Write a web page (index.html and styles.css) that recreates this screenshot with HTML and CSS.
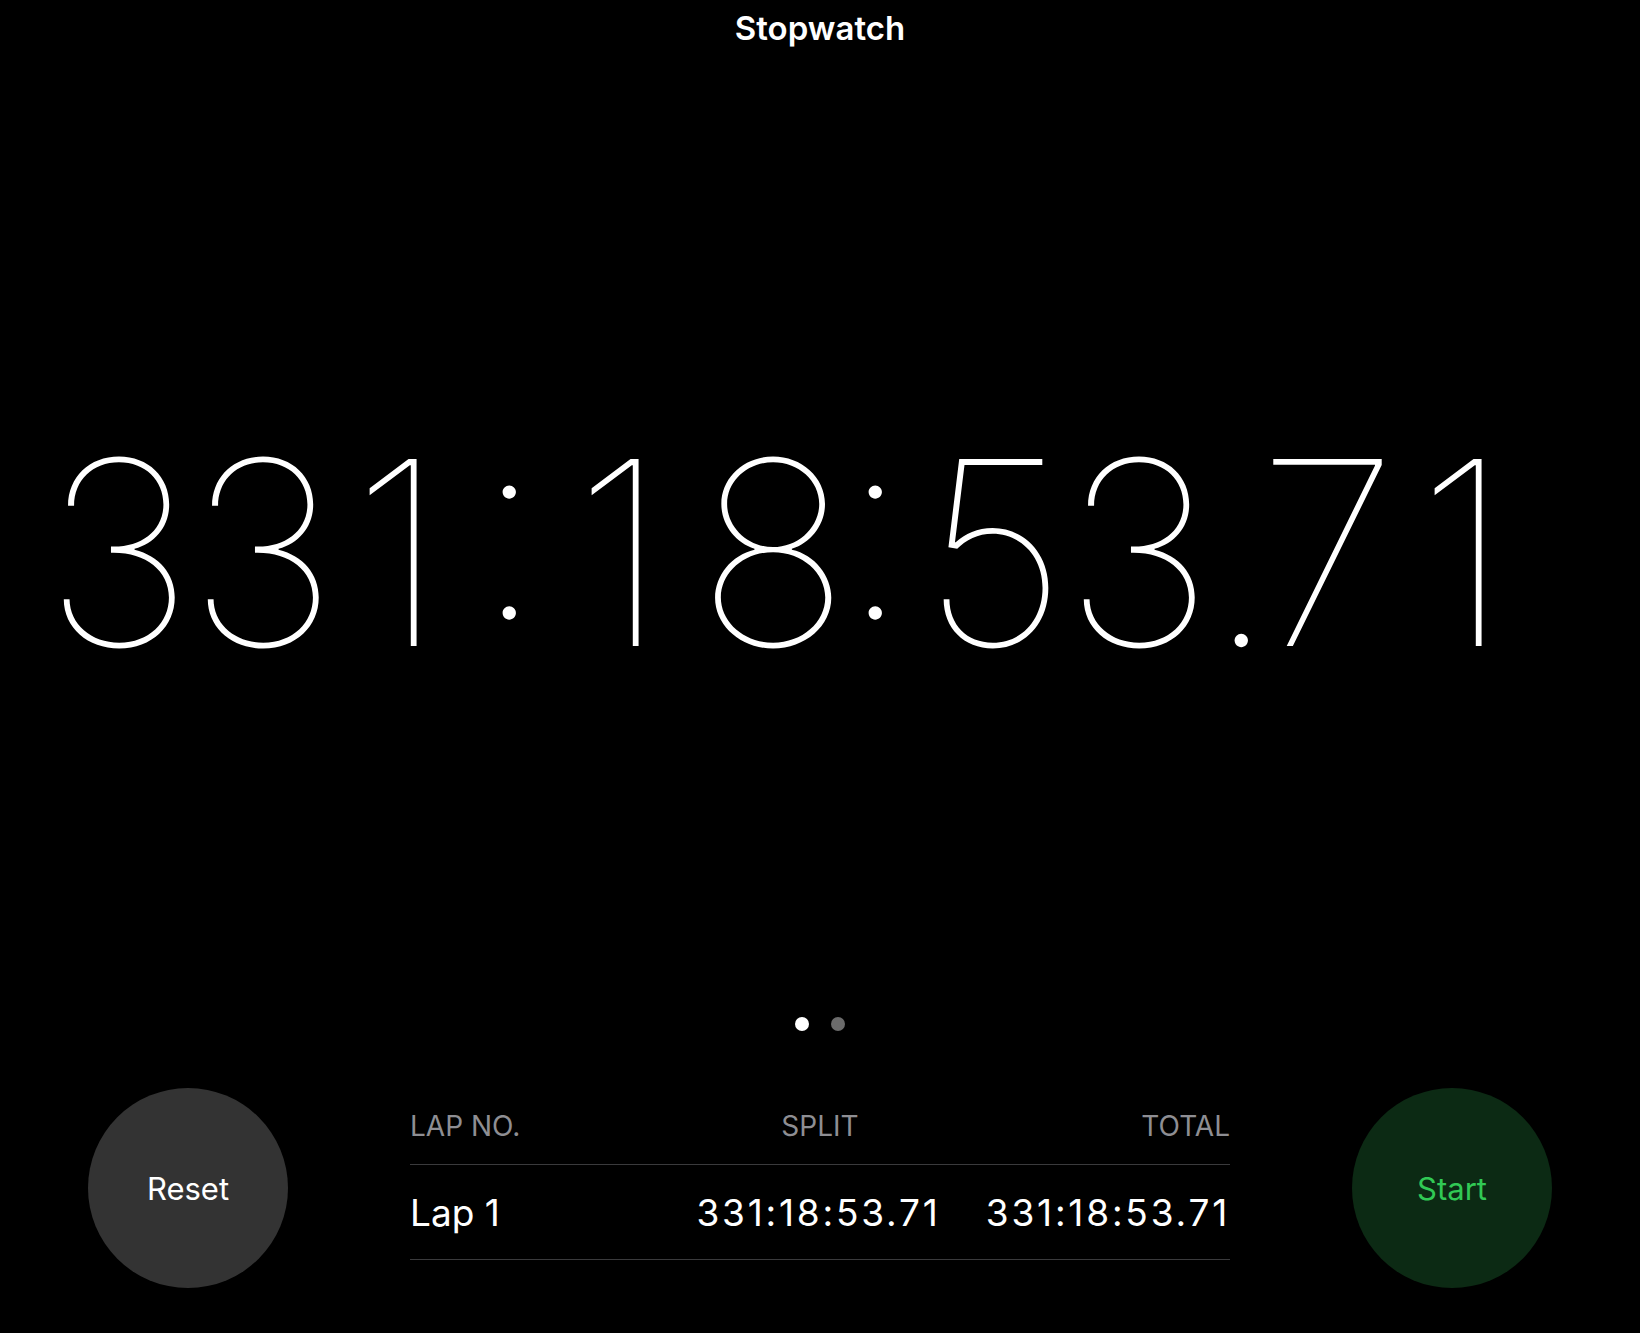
FILE: index.html
```html
<!DOCTYPE html>
<html lang="en">
<head>
    <meta charset="UTF-8">
    <meta name="viewport" content="width=device-width, initial-scale=1.0">
    <title>Stopwatch</title>
    <link rel="stylesheet" href="styles.css">
</head>
<body>
    <div id="stopwatch">
        <h1 class="title">Stopwatch</h1>

        <div class="readout">
            <span class="d">3</span><span class="d">3</span><span class="d one">1</span><span class="sep">:</span><span class="d one">1</span><span class="d">8</span><span class="sep">:</span><span class="d">5</span><span class="d">3</span><span class="pt">.</span><span class="d">7</span><span class="d one">1</span>
        </div>

        <div class="pager">
            <span class="dot active"></span>
            <span class="dot"></span>
        </div>

        <div class="controls">
            <button class="round reset">Reset</button>

            <div class="laps">
                <div class="laps-row laps-head">
                    <span class="col-lap">LAP NO.</span>
                    <span class="col-split">SPLIT</span>
                    <span class="col-total">TOTAL</span>
                </div>
                <div class="laps-row laps-item">
                    <span class="col-lap">Lap 1</span>
                    <span class="col-split">331:18:53.71</span>
                    <span class="col-total">331:18:53.71</span>
                </div>
            </div>

            <button class="round start">Start</button>
        </div>
    </div>
</body>
</html>
```

FILE: styles.css
```css
html, body {
    margin: 0;
    padding: 0;
    background-color: black;
    color: white;
    font-family: Inter, Roboto, "Noto Sans", sans-serif;
}

#stopwatch {
    display: flex;
    flex-direction: column;
    align-items: center;
}

.title {
    margin: 0;
    font-size: 33px;
    font-weight: 600;
    line-height: 56px;
}

.readout {
    display: flex;
    margin-top: 368px;
    padding-right: 58px;
    font-size: 257px;
    font-weight: 125;
    line-height: 257px;
}

.readout .d {
    width: 144px;
    text-align: center;
    letter-spacing: -8px;
}

/* the one's stem sits a little left of the cell centre */
.readout .d.one {
    width: 128px;
    padding-right: 16px;
}

.readout .sep,
.readout .pt {
    text-align: left;
}

.readout .sep {
    width: 78px;
    letter-spacing: -12px;
    font-feature-settings: "case";
}

.readout .pt {
    width: 45px;
    letter-spacing: -24px;
}

.pager {
    display: flex;
    gap: 22px;
    margin-top: 336px;
}

.dot {
    width: 14px;
    height: 14px;
    border-radius: 50%;
    background-color: #6b6b6b;
}

.dot.active {
    background-color: white;
}

.controls {
    align-self: stretch;
    display: flex;
    justify-content: space-between;
    align-items: flex-start;
    margin-top: 57px;
    padding: 0 88px;
}

.round {
    width: 200px;
    height: 200px;
    border: none;
    border-radius: 50%;
    font-family: inherit;
    font-size: 31px;
}

.reset {
    background-color: #333333;
    color: white;
}

.start {
    background-color: #0c2a14;
    color: #31c955;
}

.laps {
    width: 820px;
}

.laps-row {
    display: grid;
    grid-template-columns: 1fr 1fr 1fr;
    align-items: center;
    border-bottom: 1px solid #3a3a3c;
}

.laps-head {
    height: 76px;
    font-size: 28px;
    color: #8e8e93;
}

.laps-head .col-split {
    text-align: center;
}

.laps-item {
    height: 94px;
    font-size: 37px;
}

.laps-item .col-split,
.laps-item .col-total {
    letter-spacing: 2.8px;
}

.laps-item .col-split {
    text-align: right;
    padding-right: 16px;
}

.col-total {
    text-align: right;
}
```
